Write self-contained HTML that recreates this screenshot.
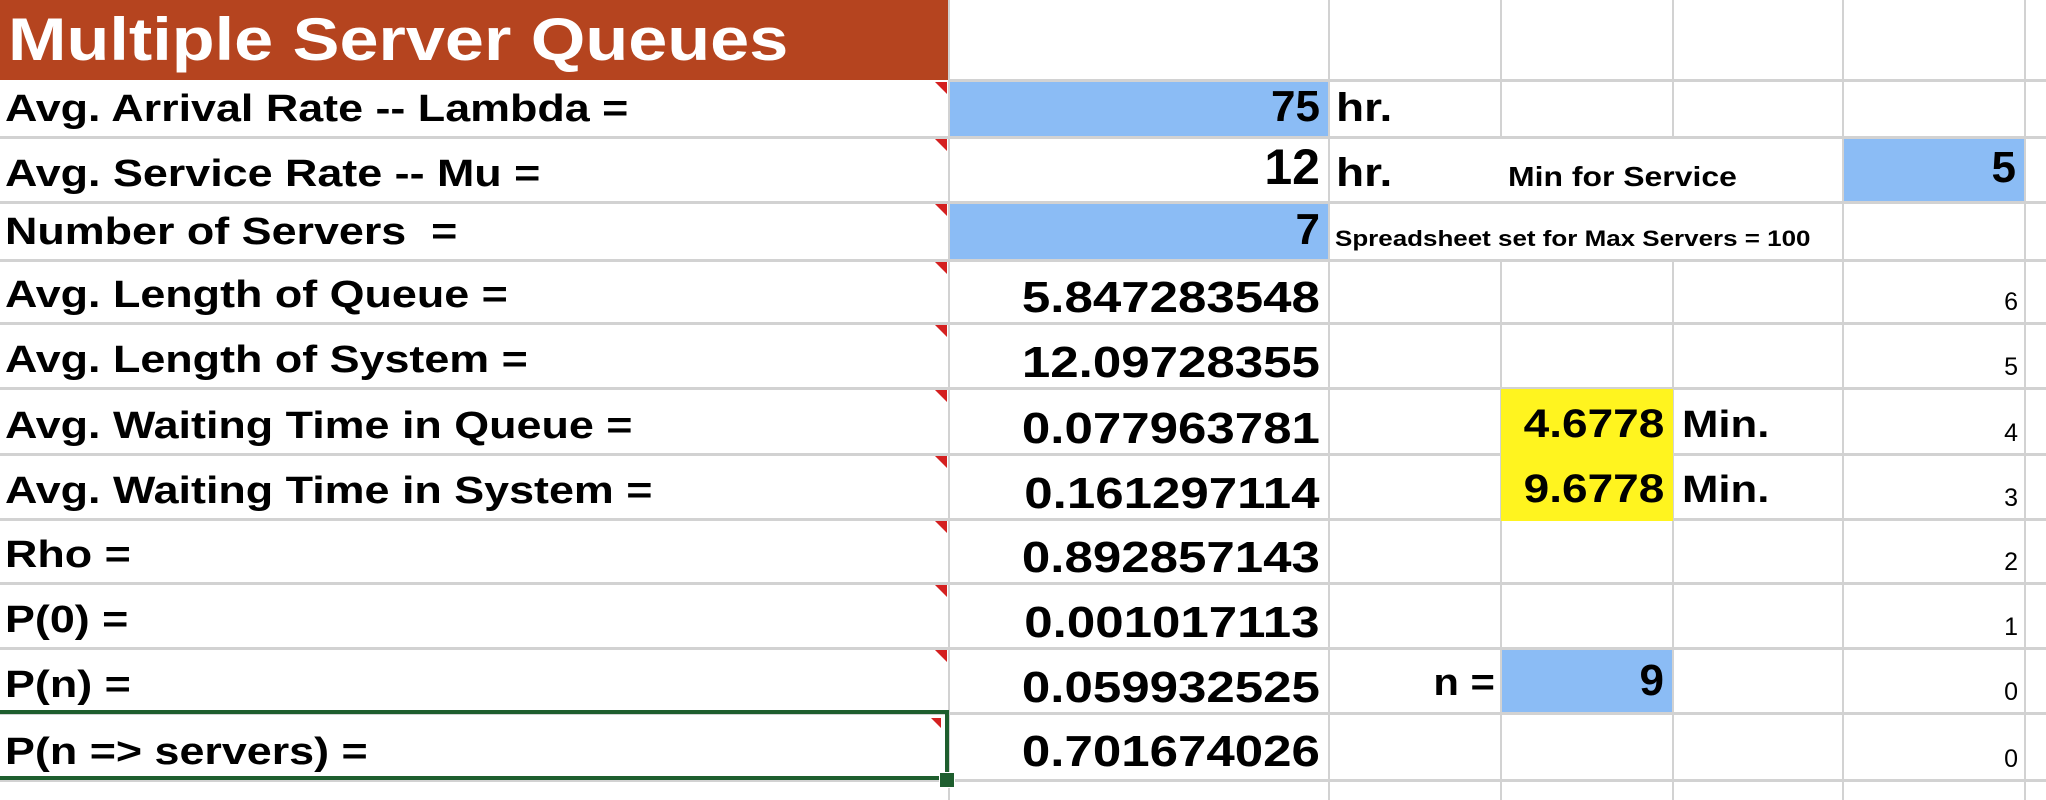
<!DOCTYPE html>
<html><head><meta charset="utf-8"><style>
body{margin:0;width:2046px;height:800px;overflow:hidden;background:#fff;font-family:"Liberation Sans",Arial,sans-serif;position:relative}
.a{position:absolute}
.h{position:absolute;left:0;width:2046px;height:3px;background:#d2d2d2}
.v{position:absolute;width:2px;background:#d2d2d2}
.t{position:absolute;font-weight:bold;color:#000;white-space:nowrap;display:flex;align-items:flex-end;box-sizing:border-box}
.t span{display:inline-block;transform-origin:left bottom}
.r{justify-content:flex-end}
.r span{transform-origin:right bottom}
.L{font-size:38px;padding-bottom:6px}
.L span{transform:scaleX(1.18)}
.N{font-size:44px;padding-bottom:0px}
.N span{transform:scaleX(1.16)}
.s115 span{transform:scaleX(1.15)}
.tri{position:absolute;width:0;height:0;border-top:12px solid #d42020;border-left:12px solid transparent}
</style></head><body>
<div class="a" style="left:0;top:0;width:949px;height:80px;background:#b5441f"></div>
<div class="a" style="left:950px;top:80px;width:379px;height:57px;background:#8bbcf5"></div>
<div class="a" style="left:950px;top:202px;width:379px;height:58px;background:#8bbcf5"></div>
<div class="a" style="left:1844px;top:137px;width:181px;height:65px;background:#8bbcf5"></div>
<div class="a" style="left:1501px;top:648px;width:172px;height:66px;background:#8bbcf5"></div>
<div class="h" style="top:79px;left:949px;width:1097px"></div>
<div class="h" style="top:136px"></div>
<div class="h" style="top:201px"></div>
<div class="h" style="top:259px"></div>
<div class="h" style="top:322px"></div>
<div class="h" style="top:387px"></div>
<div class="h" style="top:453px"></div>
<div class="h" style="top:518px"></div>
<div class="h" style="top:582px"></div>
<div class="h" style="top:647px"></div>
<div class="h" style="top:712px"></div>
<div class="h" style="top:779px"></div>
<div class="v" style="left:948px;top:0;height:800px"></div>
<div class="v" style="left:1328px;top:0;height:800px"></div>
<div class="v" style="left:1500px;top:0;height:137px"></div>
<div class="v" style="left:1500px;top:260px;height:540px"></div>
<div class="v" style="left:1672px;top:0;height:137px"></div>
<div class="v" style="left:1672px;top:260px;height:540px"></div>
<div class="v" style="left:1842px;top:0;height:800px"></div>
<div class="v" style="left:2024px;top:0;height:800px"></div>
<div class="a" style="left:1501px;top:389px;width:172px;height:132px;background:#fff41f"></div>
<div class="t" style="left:8px;top:0;height:80px;font-size:60px;color:#fff;padding-bottom:6px"><span style="transform:scaleX(1.17)">Multiple Server Queues</span></div>
<div class="t L" style="left:5px;top:80px;height:57px"><span>Avg. Arrival Rate -- Lambda =</span></div>
<div class="t L" style="left:5px;top:137px;height:65px"><span>Avg. Service Rate -- Mu =</span></div>
<div class="t L" style="left:5px;top:202px;height:58px"><span>Number of Servers&nbsp; =</span></div>
<div class="t L" style="left:5px;top:260px;height:63px"><span>Avg. Length of Queue =</span></div>
<div class="t L" style="left:5px;top:323px;height:65px"><span>Avg. Length of System =</span></div>
<div class="t L" style="left:5px;top:388px;height:66px"><span>Avg. Waiting Time in Queue =</span></div>
<div class="t L" style="left:5px;top:454px;height:65px"><span>Avg. Waiting Time in System =</span></div>
<div class="t L" style="left:5px;top:519px;height:64px"><span>Rho =</span></div>
<div class="t L" style="left:5px;top:583px;height:65px"><span>P(0) =</span></div>
<div class="t L" style="left:5px;top:648px;height:65px"><span>P(n) =</span></div>
<div class="t L" style="left:5px;top:713px;height:67px"><span>P(n =&gt; servers) =</span></div>
<div class="tri" style="left:935px;top:82px"></div>
<div class="tri" style="left:935px;top:139px"></div>
<div class="tri" style="left:935px;top:204px"></div>
<div class="tri" style="left:935px;top:262px"></div>
<div class="tri" style="left:935px;top:325px"></div>
<div class="tri" style="left:935px;top:390px"></div>
<div class="tri" style="left:935px;top:456px"></div>
<div class="tri" style="left:935px;top:521px"></div>
<div class="tri" style="left:935px;top:585px"></div>
<div class="tri" style="left:935px;top:650px"></div>
<div class="tri" style="left:931px;top:718px;border-top-width:10px;border-left-width:10px"></div>
<div class="t r" style="left:950px;top:80px;width:370px;height:57px;font-size:44px;padding-bottom:5px">75</div>
<div class="t r" style="left:950px;top:137px;width:370px;height:65px;font-size:50px;padding-bottom:6px">12</div>
<div class="t r" style="left:950px;top:202px;width:370px;height:58px;font-size:44px;padding-bottom:5px">7</div>
<div class="t r N" style="left:950px;top:260px;width:370px;height:63px"><span>5.847283548</span></div>
<div class="t r N" style="left:950px;top:323px;width:370px;height:65px"><span>12.09728355</span></div>
<div class="t r N" style="left:950px;top:388px;width:370px;height:66px"><span>0.077963781</span></div>
<div class="t r N" style="left:950px;top:454px;width:370px;height:65px"><span>0.161297114</span></div>
<div class="t r N" style="left:950px;top:519px;width:370px;height:64px"><span>0.892857143</span></div>
<div class="t r N" style="left:950px;top:583px;width:370px;height:65px"><span>0.001017113</span></div>
<div class="t r N" style="left:950px;top:648px;width:370px;height:65px"><span>0.059932525</span></div>
<div class="t r N" style="left:950px;top:713px;width:370px;height:67px;padding-bottom:3px"><span>0.701674026</span></div>
<div class="t s115" style="left:1336px;top:80px;height:57px;font-size:40px;padding-bottom:6px"><span>hr.</span></div>
<div class="t s115" style="left:1336px;top:137px;height:65px;font-size:40px;padding-bottom:6px"><span>hr.</span></div>
<div class="t" style="left:1508px;top:137px;height:65px;font-size:28px;padding-bottom:9px"><span style="transform:scaleX(1.14)">Min for Service</span></div>
<div class="t r" style="left:1846px;top:137px;width:170px;height:65px;font-size:44px;padding-bottom:9px">5</div>
<div class="t" style="left:1335px;top:202px;height:58px;font-size:22px;padding-bottom:8px"><span style="transform:scaleX(1.18)">Spreadsheet set for Max Servers = 100</span></div>
<div class="t r s115" style="left:1502px;top:388px;width:162px;height:66px;font-size:40px;padding-bottom:7px"><span>4.6778</span></div>
<div class="t r s115" style="left:1502px;top:454px;width:162px;height:65px;font-size:40px;padding-bottom:7px"><span>9.6778</span></div>
<div class="t s115" style="left:1682px;top:388px;height:66px;font-size:38px;padding-bottom:7px"><span>Min.</span></div>
<div class="t s115" style="left:1682px;top:454px;height:65px;font-size:38px;padding-bottom:7px"><span>Min.</span></div>
<div class="t r" style="left:1330px;top:648px;width:165px;height:65px;font-size:38px;padding-bottom:8px"><span style="transform:scaleX(1.1)">n =</span></div>
<div class="t r" style="left:1502px;top:648px;width:162px;height:65px;font-size:44px;padding-bottom:7px">9</div>
<div class="t r" style="left:1846px;top:260px;width:172px;height:63px;font-size:25px;font-weight:normal;padding-bottom:6px">6</div>
<div class="t r" style="left:1846px;top:323px;width:172px;height:65px;font-size:25px;font-weight:normal;padding-bottom:6px">5</div>
<div class="t r" style="left:1846px;top:388px;width:172px;height:66px;font-size:25px;font-weight:normal;padding-bottom:6px">4</div>
<div class="t r" style="left:1846px;top:454px;width:172px;height:65px;font-size:25px;font-weight:normal;padding-bottom:6px">3</div>
<div class="t r" style="left:1846px;top:519px;width:172px;height:64px;font-size:25px;font-weight:normal;padding-bottom:6px">2</div>
<div class="t r" style="left:1846px;top:583px;width:172px;height:65px;font-size:25px;font-weight:normal;padding-bottom:6px">1</div>
<div class="t r" style="left:1846px;top:648px;width:172px;height:65px;font-size:25px;font-weight:normal;padding-bottom:6px">0</div>
<div class="t r" style="left:1846px;top:713px;width:172px;height:67px;font-size:25px;font-weight:normal;padding-bottom:6px">0</div>
<div class="a" style="left:0;top:710px;width:949px;height:70px;box-sizing:border-box;border:4px solid #1e5e2e;border-left:none"></div>
<div class="a" style="left:939px;top:772px;width:14px;height:14px;background:#1e5e2e;border:1px solid #fff"></div>
</body></html>
